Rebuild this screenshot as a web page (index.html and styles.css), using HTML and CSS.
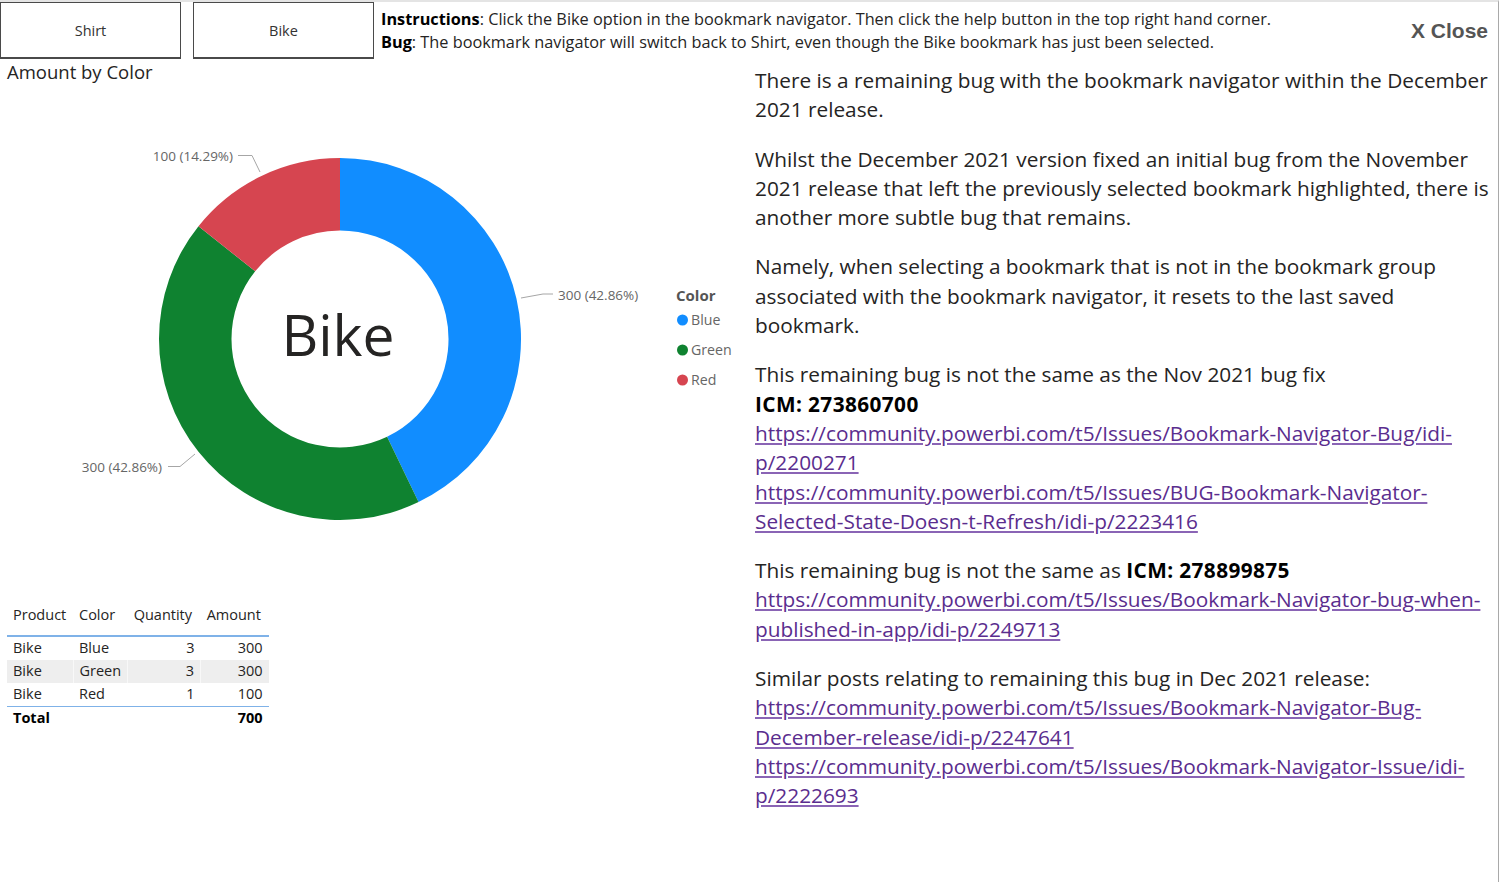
FILE: index.html
```html
<!DOCTYPE html>
<html lang="en">
<head>
<meta charset="utf-8">
<title>Bookmark Navigator Bug</title>
<link rel="stylesheet" href="styles.css">
</head>
<body>
<div class="page">
  <header class="topbar">
    <nav class="navigator">
      <button class="nav-btn">Shirt</button>
      <button class="nav-btn">Bike</button>
    </nav>
    <div class="instructions">
      <p><b>Instructions</b>: Click the Bike option in the bookmark navigator. Then click the help button in the top right hand corner.</p>
      <p><b>Bug</b>: The bookmark navigator will switch back to Shirt, even though the Bike bookmark has just been selected.</p>
    </div>
    <div class="close">X Close</div>
  </header>
  <main class="content">
    <section class="left">
      <h2 class="visual-title">Amount by Color</h2>
      <svg class="donut" width="740" height="500" viewBox="0 84 740 500">
        <path fill="#118DFF" d="M340 158 A181 181 0 0 1 418.54 502.08 L387.08 436.76 A108.5 108.5 0 0 0 340 230.5 Z"/>
        <path fill="#0F8230" d="M418.54 502.08 A181 181 0 0 1 198.49 226.15 L255.17 271.35 A108.5 108.5 0 0 0 387.08 436.76 Z"/>
        <path fill="#D64550" d="M198.49 226.15 A181 181 0 0 1 340 158 L340 230.5 A108.5 108.5 0 0 0 255.17 271.35 Z"/>
        <g class="leader">
          <polyline points="238,155.5 252,155.5 260,172"/>
          <polyline points="521,298 543,294 553,294"/>
          <polyline points="168,466.5 180,466.5 195,454"/>
        </g>
        <text class="dlabel" x="233" y="160.5" text-anchor="end">100 (14.29%)</text>
        <text class="dlabel" x="558" y="299.5">300 (42.86%)</text>
        <text class="dlabel" x="162" y="471.5" text-anchor="end">300 (42.86%)</text>
        <text class="center" x="338" y="356" text-anchor="middle">Bike</text>
        <text class="legend-title" x="676" y="301">Color</text>
        <circle cx="682.5" cy="320" r="5.5" fill="#118DFF"/>
        <text class="legend-item" x="691" y="325">Blue</text>
        <circle cx="682.5" cy="350" r="5.5" fill="#0F8230"/>
        <text class="legend-item" x="691" y="355">Green</text>
        <circle cx="682.5" cy="380" r="5.5" fill="#D64550"/>
        <text class="legend-item" x="691" y="385">Red</text>
      </svg>
      <table class="grid">
        <thead>
          <tr><th class="c1">Product</th><th class="c2">Color</th><th class="c3">Quantity</th><th class="c4">Amount</th></tr>
        </thead>
        <tbody>
          <tr><td>Bike</td><td>Blue</td><td class="num">3</td><td class="num">300</td></tr>
          <tr class="alt"><td>Bike</td><td>Green</td><td class="num">3</td><td class="num">300</td></tr>
          <tr><td>Bike</td><td>Red</td><td class="num">1</td><td class="num">100</td></tr>
        </tbody>
        <tfoot>
          <tr><td>Total</td><td></td><td></td><td class="num">700</td></tr>
        </tfoot>
      </table>
    </section>
    <section class="right">
      <p>There is a remaining bug with the bookmark navigator within the December<br>2021 release.</p>
      <p>Whilst the December 2021 version fixed an initial bug from the November<br>2021 release that left the previously selected bookmark highlighted, there is<br>another more subtle bug that remains.</p>
      <p>Namely, when selecting a bookmark that is not in the bookmark group<br>associated with the bookmark navigator, it resets to the last saved<br>bookmark.</p>
      <p>This remaining bug is not the same as the Nov 2021 bug fix<br><b>ICM: 273860700</b><br><a href="#">https://community.powerbi.com/t5/Issues/Bookmark-Navigator-Bug/idi-<br>p/2200271</a><br><a href="#">https://community.powerbi.com/t5/Issues/BUG-Bookmark-Navigator-<br>Selected-State-Doesn-t-Refresh/idi-p/2223416</a></p>
      <p>This remaining bug is not the same as <b>ICM: 278899875</b><br><a href="#">https://community.powerbi.com/t5/Issues/Bookmark-Navigator-bug-when-<br>published-in-app/idi-p/2249713</a></p>
      <p>Similar posts relating to remaining this bug in Dec 2021 release:<br><a href="#">https://community.powerbi.com/t5/Issues/Bookmark-Navigator-Bug-<br>December-release/idi-p/2247641</a><br><a href="#">https://community.powerbi.com/t5/Issues/Bookmark-Navigator-Issue/idi-<br>p/2222693</a></p>
    </section>
  </main>
</div>
</body>
</html>
```
FILE: styles.css
```css
* { box-sizing: border-box; }
html, body { margin: 0; padding: 0; background: #fff; }
body {
  font-family: "Open Sans", "Noto Sans", sans-serif;
  color: #252423;
}
.page {
  width: 1499px;
  height: 882px;
  border-top: 2px solid #e4e4e4;
  border-right: 1px solid #a9a9a9;
  overflow: hidden;
  position: relative;
}
.topbar {
  display: flex;
  align-items: flex-start;
  height: 58px;
}
.navigator {
  display: flex;
  gap: 12px;
}
.nav-btn {
  width: 181px;
  height: 57px;
  background: #fff;
  border: 1px solid #4a4a4a;
  border-bottom-width: 2px;
  font-family: "Open Sans", sans-serif;
  font-size: 14.5px;
  color: #333;
  padding: 0;
}
.instructions {
  margin-left: 7px;
  padding-top: 6px;
  flex: 1;
  font-size: 16.3px;
  line-height: 23px;
  color: #252423;
}
.instructions p { margin: 0; white-space: nowrap; }
.instructions b { color: #000; font-weight: 700; }
.close {
  font-family: "Liberation Sans", Arial, sans-serif;
  font-weight: 700;
  font-size: 21px;
  color: #555;
  padding-top: 17px;
  margin-right: 10px;
}
.content {
  display: grid;
  grid-template-columns: 755px 1fr;
}
.visual-title {
  margin: 0 0 0 7px;
  font-size: 18.5px;
  font-weight: 400;
  line-height: 24px;
  color: #252423;
}
.donut { display: block; }
.leader polyline { fill: none; stroke: #a6a6a6; stroke-width: 1; }
.dlabel { font-family: "Open Sans", sans-serif; font-size: 13.5px; fill: #666; }
.center { font-family: "Open Sans", sans-serif; font-size: 57px; fill: #252423; }
.legend-title { font-family: "Open Sans", sans-serif; font-size: 15px; font-weight: 700; fill: #555; }
.legend-item { font-family: "Open Sans", sans-serif; font-size: 14.2px; fill: #666; }

.grid {
  margin: 19px 0 0 7px;
  border-collapse: collapse;
  font-size: 14.5px;
  color: #252423;
}
.grid th {
  font-weight: 400;
  text-align: left;
  padding: 3px 6px 11px;
  line-height: 18px;
  border-bottom: 2px solid #7fb2e8;
  white-space: nowrap;
}
.grid .c1 { width: 66px; }
.grid .c2 { width: 54px; }
.grid .c3 { width: 73px; }
.grid .c4 { width: 68px; }
.grid td {
  padding: 2px 6px 3px;
  line-height: 18px;
  height: 23px;
  white-space: nowrap;
}
.grid .num { text-align: right; }
.grid tbody tr:last-child td { border-bottom: 1px solid #7fb2e8; }
.grid tr.alt td { background: #eeeeee; border-left: 1px solid #f8f8f8; }
.grid tr.alt td:first-child { border-left: none; }
.grid tfoot td { font-weight: 700; color: #000; }

.right {
  padding-top: 6px;
  font-size: 20.8px;
  line-height: 29.3px;
  color: #252423;
}
.right p { margin: 0 0 20px; white-space: nowrap; }
.right b { color: #000; font-weight: 700; letter-spacing: 0.4px; }
.right a { color: #5a2d8e; text-decoration: underline; text-decoration-color: #8a64b5; }
```
